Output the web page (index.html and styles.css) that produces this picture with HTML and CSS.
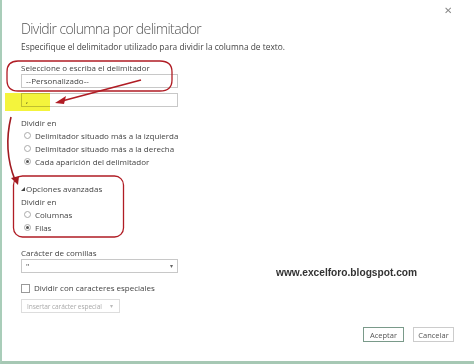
FILE: index.html
```html
<!DOCTYPE html>
<html lang="es">
<head>
    <meta charset="UTF-8">
    <title>Dividir columna por delimitador</title>
    <link rel="stylesheet" href="styles.css">
</head>
<body>
    <div class="dialog">
        <div class="header">
            <h1 class="title">Dividir columna por delimitador</h1>
            <span class="close">✕</span>
        </div>
        <p class="intro">Especifique el delimitador utilizado para dividir la columna de texto.</p>

        <label class="field-label">Seleccione o escriba el delimitador</label>
        <div class="select">--Personalizado--</div>
        <div class="input">,</div>

        <div class="group">
            <div class="field-label">Dividir en</div>
            <div class="radio"><span class="dot"></span>Delimitador situado más a la izquierda</div>
            <div class="radio"><span class="dot"></span>Delimitador situado más a la derecha</div>
            <div class="radio"><span class="dot on"></span>Cada aparición del delimitador</div>
        </div>

        <div class="advanced">
            <div class="toggle"><span class="tri"></span>Opciones avanzadas</div>
            <div class="field-label">Dividir en</div>
            <div class="radio"><span class="dot"></span>Columnas</div>
            <div class="radio"><span class="dot on"></span>Filas</div>
        </div>

        <div class="quote-row">
            <div class="quote-col">
                <label class="field-label">Carácter de comillas</label>
                <div class="select with-arrow"><span>"</span><span class="caret">▾</span></div>
                <div class="check"><span class="box"></span>Dividir con caracteres especiales</div>
                <div class="insert">Insertar carácter especial <span class="caret">▾</span></div>
            </div>
            <div class="watermark">www.excelforo.blogspot.com</div>
        </div>

        <div class="footer">
            <button class="btn primary">Aceptar</button>
            <button class="btn">Cancelar</button>
        </div>

        <svg class="marks" width="474" height="364" viewBox="0 0 474 364">
            <rect class="hl" x="5" y="93" width="45" height="18" fill="#f4f43c"/>
            <path d="M30 61 H160 Q172 61 172 72 V80 Q172 91 160 91 H18 Q7 91 7 80 V72 Q7 61 18 61 Z" fill="none" stroke="#b01c24" stroke-width="1.3"/>
            <path d="M141 80 L62 101" stroke="#b01c24" stroke-width="1.8" fill="none"/>
            <path d="M55 103 L66 96 L64 104 Z" fill="#b01c24"/>
            <path d="M11 117 Q3 150 15 180" stroke="#a01a20" stroke-width="1.6" fill="none"/>
            <path d="M18 185 L11 178 L19 176 Z" fill="#a01a20"/>
            <rect x="13.5" y="176" width="110" height="61" rx="9" fill="none" stroke="#b01c24" stroke-width="1.3"/>
        </svg>
    </div>
</body>
</html>
```

FILE: styles.css
```css
body {
    margin: 0;
    background: #fff;
    font-family: "Open Sans", "Noto Sans", sans-serif;
    color: #444;
}
.dialog {
    position: relative;
    width: 474px;
    height: 364px;
    box-sizing: border-box;
    border-left: 2px solid #a9cdb9;
    border-bottom: 3px solid #a6c8b4;
    padding: 0 20px 0 19px;
    font-size: 8px;
    overflow: hidden;
}
.header {
    display: flex;
    justify-content: space-between;
    align-items: flex-start;
    padding-top: 3px;
}
.title {
    margin: 16px 0 0;
    font-size: 14px;
    letter-spacing: -0.6px;
    font-weight: 300;
    color: #555;
}
.close {
    font-size: 10px;
    color: #888;
    margin-right: 2px;
}
.intro {
    margin: 3px 0 0;
    font-size: 8.4px;
}
.field-label {
    display: block;
    margin-top: 10px;
    line-height: 12px;
}
.select, .input {
    width: 157px;
    height: 14px;
    box-sizing: border-box;
    border: 1px solid #c8c8c8;
    padding: 0 4px;
    line-height: 12px;
    background: #fff;
}
.input {
    margin-top: 5px;
}
.with-arrow {
    display: flex;
    justify-content: space-between;
}
.caret {
    font-size: 6px;
    color: #666;
}
.group {
    margin-top: 4px;
}
.radio {
    display: flex;
    align-items: center;
    line-height: 13px;
    padding-left: 3px;
}
.dot {
    width: 5px;
    height: 5px;
    border: 1px solid #aaa;
    border-radius: 50%;
    margin-right: 4px;
    position: relative;
}
.dot.on::after {
    content: "";
    position: absolute;
    left: 1px;
    top: 1px;
    width: 3px;
    height: 3px;
    border-radius: 50%;
    background: #555;
}
.advanced {
    margin-top: 14px;
}
.toggle {
    display: flex;
    align-items: center;
    line-height: 13px;
}
.tri {
    width: 0;
    height: 0;
    border-left: 4px solid transparent;
    border-bottom: 4px solid #444;
    margin-right: 1px;
}
.advanced .field-label {
    margin-top: 1px;
}
.quote-row {
    display: flex;
    align-items: flex-start;
}
.quote-col {
    margin-top: 3px;
}
.check {
    display: flex;
    align-items: center;
    margin-top: 9px;
    line-height: 12px;
}
.box {
    width: 7px;
    height: 7px;
    border: 1px solid #999;
    margin-right: 4px;
}
.insert {
    display: flex;
    align-items: center;
    gap: 8px;
    white-space: nowrap;
    margin-top: 5px;
    width: 99px;
    height: 14px;
    box-sizing: border-box;
    border: 1px solid #ddd;
    color: #aaa;
    padding-left: 5px;
    font-size: 6.6px;
    letter-spacing: -0.1px;
}
.insert .caret {
    color: #bbb;
}
.watermark {
    margin: 33px 0 0 98px;
    font-family: "Liberation Sans", Arial, sans-serif;
    font-weight: bold;
    font-size: 10.2px;
    color: #333;
}
.footer {
    display: flex;
    justify-content: flex-end;
    gap: 9px;
    margin-top: 14px;
}
.btn {
    width: 41px;
    height: 15px;
    padding: 0;
    background: #fff;
    border: 1px solid #ccc;
    font-family: inherit;
    font-size: 7.5px;
    color: #555;
}
.btn.primary {
    border-color: #7a9a8a;
}
.marks {
    position: absolute;
    left: -2px;
    top: 0;
    pointer-events: none;
}
.hl {
    mix-blend-mode: multiply;
}
```
